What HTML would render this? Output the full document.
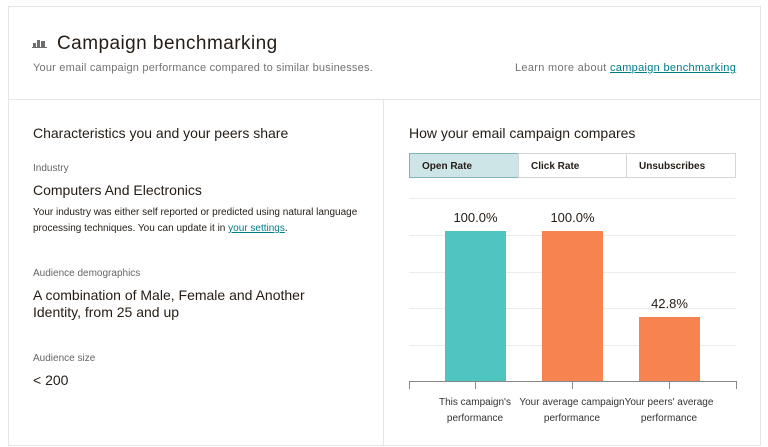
<!DOCTYPE html>
<html><head><style>
*{margin:0;padding:0;box-sizing:border-box}
body{width:768px;height:447px;background:#fff;font-family:"Liberation Sans",sans-serif;color:#241c15;position:relative;overflow:hidden}
.card{position:absolute;left:8px;top:6px;width:753px;height:440px;border:1px solid #e6e6e4;background:#fff}
.abs{position:absolute;white-space:nowrap}
a{color:#007c89;text-decoration:underline}
.grid{position:absolute;left:409px;width:327px;height:1px;background:#ececec}
.tab{position:absolute;top:153px;height:25px;border:1px solid #d6d6d4;font-size:10px;font-weight:bold;padding:7px 0 0 12px;color:#241c15}
</style></head><body>
<div class="card"></div>
<div style="position:absolute;left:8px;top:99px;width:753px;height:1px;background:#e6e6e4"></div>
<div style="position:absolute;left:383px;top:100px;width:1px;height:345px;background:#e6e6e4"></div>
<div class="abs" style="left:33px;top:43px;width:3px;height:5px;background:#6e6e6e"></div>
<div class="abs" style="left:37px;top:40px;width:3px;height:8px;background:#6e6e6e"></div>
<div class="abs" style="left:41px;top:41px;width:4px;height:7px;background:#6e6e6e"></div>
<div class="abs" style="left:32px;top:47px;width:15px;height:1px;background:#6e6e6e"></div>
<div class="abs" style="left:57px;top:33px;font-size:19px;letter-spacing:0.45px">Campaign benchmarking</div>
<div class="abs" style="left:33px;top:62px;font-size:11px;color:#727272;letter-spacing:0.2px">Your email campaign performance compared to similar businesses.</div>
<div class="abs" style="left:515px;top:62px;font-size:11px;color:#727272;letter-spacing:0.3px">Learn more about <a>campaign benchmarking</a></div>

<div class="abs" style="left:33px;top:125px;font-size:14px">Characteristics you and your peers share</div>
<div class="abs" style="left:33px;top:163px;font-size:10px;color:#666">Industry</div>
<div class="abs" style="left:33px;top:182px;font-size:14px">Computers And Electronics</div>
<div class="abs" style="left:33px;top:205px;font-size:10px;line-height:16px">Your industry was either self reported or predicted using natural language<br>processing techniques. You can update it in <a>your settings</a>.</div>
<div class="abs" style="left:33px;top:268px;font-size:10px;color:#666">Audience demographics</div>
<div class="abs" style="left:33px;top:287px;font-size:14px;line-height:17px">A combination of Male, Female and Another<br>Identity, from 25 and up</div>
<div class="abs" style="left:33px;top:353px;font-size:10px;color:#666">Audience size</div>
<div class="abs" style="left:33px;top:372px;font-size:14px">&lt; 200</div>

<div class="abs" style="left:409px;top:125px;font-size:14px">How your email campaign compares</div>
<div class="tab" style="left:409px;width:110px;background:#cde5e6;border-color:#7fb3b8">Open Rate</div>
<div class="tab" style="left:518px;width:109px">Click Rate</div>
<div class="tab" style="left:626px;width:110px">Unsubscribes</div>

<div class="grid" style="top:198px"></div>
<div class="grid" style="top:235px"></div>
<div class="grid" style="top:272px"></div>
<div class="grid" style="top:308px"></div>
<div class="grid" style="top:345px"></div>
<div class="abs" style="left:445px;top:231px;width:61px;height:150px;background:#4ec5c1"></div>
<div class="abs" style="left:542px;top:231px;width:61px;height:150px;background:#f78351"></div>
<div class="abs" style="left:639px;top:317px;width:61px;height:64px;background:#f78351"></div>
<div class="abs" style="left:445px;top:210px;width:61px;text-align:center;font-size:13px">100.0%</div>
<div class="abs" style="left:542px;top:210px;width:61px;text-align:center;font-size:13px">100.0%</div>
<div class="abs" style="left:639px;top:296px;width:61px;text-align:center;font-size:13px">42.8%</div>
<div class="abs" style="left:409px;top:381px;width:328px;height:1px;background:#888"></div>
<div class="abs" style="left:409px;top:381px;width:1px;height:8px;background:#888"></div>
<div class="abs" style="left:475px;top:381px;width:1px;height:8px;background:#888"></div>
<div class="abs" style="left:572px;top:381px;width:1px;height:8px;background:#888"></div>
<div class="abs" style="left:669px;top:381px;width:1px;height:8px;background:#888"></div>
<div class="abs" style="left:736px;top:381px;width:1px;height:8px;background:#888"></div>
<div class="abs" style="left:425px;top:395px;width:100px;text-align:center;font-size:10px;line-height:16px;color:#333">This campaign's<br>performance</div>
<div class="abs" style="left:517px;top:395px;width:110px;text-align:center;font-size:10px;line-height:16px;color:#333">Your average campaign<br>performance</div>
<div class="abs" style="left:619px;top:395px;width:100px;text-align:center;font-size:10px;line-height:16px;color:#333">Your peers' average<br>performance</div>
</body></html>
